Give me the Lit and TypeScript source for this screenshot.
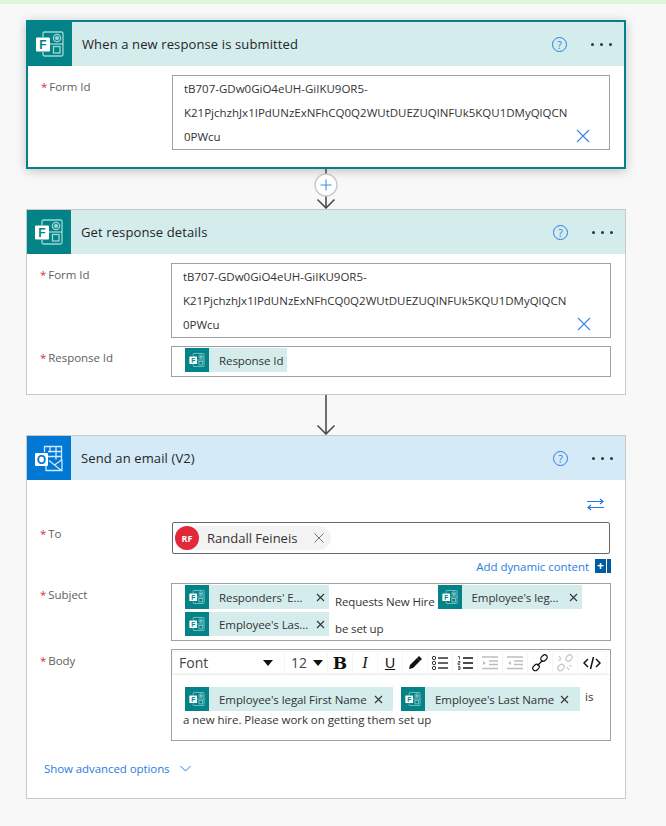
import { LitElement, html, css, svg } from "lit";
import { customElement } from "lit/decorators.js";

const formsIcon = (size: number) => html`<svg class="logo" width=${size} height=${size} viewBox="0 0 44 44" style="background:#038387">
  ${svg`<g fill="none" stroke="#9fd6d6" stroke-width="1.3">
    <path d="M15 15v-3.5a1.5 1.5 0 0 1 1.500-1.500h17a1.500 1.500 0 0 1 1.500 1.500v21a1.500 1.500 0 0 1-1.500 1.500h-17a1.500 1.500 0 0 1-1.500-1.500V30"/>
    <path d="M22 22h13" />
    <circle cx="29" cy="16" r="3.6"/><circle cx="29" cy="16" r="1.4" fill="#9fd6d6"/>
    <rect x="25.5" y="24.5" width="6.5" height="6.5"/>
  </g>
  <rect x="8" y="15.5" width="14" height="14" rx="1" fill="#fff"/>
  <text x="15" y="27" text-anchor="middle" font-family="Liberation Sans, sans-serif" font-weight="700" font-size="12" fill="#038387">F</text>`}
</svg>`;

const outlookIcon = html`<svg class="logo" width="44" height="44" viewBox="0 0 44 44" style="background:#0078d4">
  ${svg`<g fill="none" stroke="#cfe8fa" stroke-width="1.3">
    <path d="M17.500 16V10.500h17V24"/>
    <path d="M23 10.500v6M29 10.500v13M21 15.500h13.500M21 20.500h13.500"/>
    <path d="M19 30v4.500h16V23.500M22 24.500l5.500 4.500 7-5M27.500 29l7 5.500"/>
  </g>
  <rect x="8" y="17" width="13" height="13" rx="1" fill="#fff"/>
  <text x="14.5" y="27.6" text-anchor="middle" font-family="Liberation Sans, sans-serif" font-weight="700" font-size="12" fill="#0078d4">O</text>`}
</svg>`;

const helpIcon = html`<svg width="15" height="15" viewBox="0 0 15 15" class="help">
  ${svg`<circle cx="7.5" cy="7.5" r="7" fill="none" stroke="#2a7ee0" stroke-width="1"/>
  <text x="7.5" y="11.500" text-anchor="middle" font-family="Open Sans, sans-serif" font-size="10.500" fill="#2a7ee0">?</text>`}
</svg>`;

const closeBlue = html`<svg class="clear" width="14" height="14" viewBox="0 0 14 14">
  ${svg`<path d="M1 1l12 12M13 1L1 13" stroke="#3b82e8" stroke-width="1.1" fill="none"/>`}
</svg>`;

const x = (mr: number) => html`<svg class="x" style="margin-right:${mr}px" width="9" height="9" viewBox="0 0 9 9">
  ${svg`<path d="M1 1l7 7M8 1L1 8" stroke="#333" stroke-width="1.1" fill="none"/>`}
</svg>`;

const chip = (label: string, w: number, mr = 4) => html`<span class="chip" style="width:${w}px">
  ${formsIcon(24)}<span class="chip-t">${label}</span>${mr >= 0 ? x(mr) : ""}
</span>`;

const connector = (plus: boolean) => html`<div class="conn">
  <svg width="26" height="40" viewBox="0 0 26 40">
    ${svg`<path d="M13 0V39M4.500 30.500L13 39L21.500 30.500" fill="none" stroke="#4d4d4d" stroke-width="1.6"/>`}
    ${plus
      ? svg`<circle cx="13" cy="16" r="11" fill="#fff" stroke="#c8c8c8" stroke-width="1.4"/>
         <path d="M13 10.500v11M7.500 16h11" stroke="#3f8fe0" stroke-width="1.1"/>`
      : ""}
  </svg>
</div>`;

const formValue = html`<div>tB707-GDw0GiO4eUH-GiIKU9OR5-</div>
  <div>K21PjchzhJx1IPdUNzExNFhCQ0Q2WUtDUEZUQlNFUk5KQU1DMyQlQCN</div>
  <div>0PWcu</div>`;

const header = (icon: unknown, title: string) => html`<div class="head">
  ${icon}
  <div class="title">${title}</div>
  ${helpIcon}
  <div class="dots"><i></i><i></i><i></i></div>
</div>`;

const req = (t: string) => html`<div class="lab"><b>*</b>${t}</div>`;

const tb = (content: unknown, cls = "") => html`<span class="tb ${cls}">${content}</span>`;

const caret = html`<svg width="10" height="6" viewBox="0 0 10 6">${svg`<path d="M0 0h10L5 6z" fill="#111"/>`}</svg>`;

const ico = (inner: unknown) => html`<svg width="18" height="18" viewBox="0 0 18 18">${inner}</svg>`;

const listLines = (color: string) => svg`<path d="M7 4h10M7 9h10M7 14h10" stroke=${color} stroke-width="1.4"/>`;

@customElement("app-root")
export class AppRoot extends LitElement {
  static styles = css`
    :host { display: block; width: 666px; height: 826px; background: #f8f8f8; overflow: hidden;
      font-family: "Open Sans", "Noto Sans", sans-serif; font-size: 11.5px; color: #333; }
    .top { height: 4px; background: #dff6dd; }
    .flow { display: flex; flex-direction: column; padding: 16px 40px 0 26px; }
    .card { background: #fff; border: 1px solid #c8c8c8; box-sizing: border-box; width: 600px; }
    .card.sel { border: 2px solid #038387; box-shadow: 0 2px 10px rgba(0,0,0,.22); }
    .head { height: 44px; display: flex; align-items: center; background: #d4ecec; }
    .blue .head { background: #d5eaf7; }
    .logo { display: block; flex: none; }
    .title { flex: 1; margin-left: 10px; font-size: 13px; color: #252525; letter-spacing: 0.12px; }
    .help { flex: none; margin-right: 24px; }
    .dots { display: flex; gap: 6px; margin-right: 12px; }
    .dots i { width: 3px; height: 3px; border-radius: 50%; background: #333; }
    .body { padding: 9px 14px 17px 0; display: flex; flex-direction: column; gap: 8px; }
    .row { display: grid; grid-template-columns: 144px 1fr; }
    .lab { padding: 4px 0 0 13px; color: #605e5c; font-size: 11.5px; letter-spacing: -0.05px; }
    .lab b { color: #d13438; font-weight: 400; margin-right: 2px; }
    .box { position: relative; border: 1px solid #a0a0a0; box-sizing: border-box; color: #333; }
    .val { height: 75px; padding: 1px 0 0 11px; line-height: 24px; white-space: nowrap; font-size: 11.5px; }
    .clear { position: absolute; right: 19px; bottom: 6px; }
    .single { height: 31px; padding: 1px 13px; }
    .chip { display: inline-flex; align-items: center; flex: none; height: 24px; background: #d4ecec; white-space: nowrap; box-sizing: border-box; }
    .chip-t { flex: 1; padding-left: 10px; letter-spacing: -0.08px; color: #333; font-size: 11.5px; }
    .x { flex: none; }
    .conn { height: 40px; display: flex; justify-content: center; align-items: stretch; }
    .conn svg { display: block; }
    .swap { height: 42px; display: flex; justify-content: flex-end; align-items: flex-end; padding-right: 7px; box-sizing: border-box; padding-bottom: 11px; }
    .b3 { padding: 0 14px 0 0; display: flex; flex-direction: column; }
    .to { height: 32px; margin: 0 1px; border: 1px solid #666; border-radius: 2px; box-sizing: border-box; display: flex; align-items: center; padding-left: 2px; }
    .person { display: flex; align-items: center; height: 24px; width: 156px; border-radius: 12px; background: #f3f3f3; font-size: 13px; color: #333; }
    .av { width: 24px; height: 24px; border-radius: 50%; background: #e1293a; color: #fff; font-size: 9px; font-weight: 700; display: flex; align-items: center; justify-content: center; margin-right: 8px; }
    .person .n { flex: 1; }
    .person svg { margin-right: 7px; }
    .dyn { height: 29px; display: flex; justify-content: flex-end; align-items: center; gap: 6px; color: #2a7ee0; font-size: 11.5px; letter-spacing: -0.06px; padding-bottom: 5px; box-sizing: border-box; }
    .dyn .btn { width: 16px; height: 14px; background: linear-gradient(90deg, #005ba1 0 11px, #fff 11px 12px, #005ba1 12px); color: #fff; font-size: 12px; font-weight: 700; line-height: 13px; padding-right: 5px; box-sizing: border-box; text-align: center; letter-spacing: 0; }
    .subject { height: 58px; padding: 1px 0 0 13px; display: flex; flex-direction: column; gap: 3px; }
    .sr { display: flex; height: 24px; }
    .sr .t { margin: 8px 3px 0 6px; line-height: 18px; letter-spacing: -0.13px; white-space: nowrap; }
    .gap8 { height: 8px; }
    .rte { height: 92px; }
    .toolbar { height: 25px; display: flex; gap: 1px; padding: 2px 0 0 1px; box-sizing: border-box; border-bottom: 1px solid #eee; }
    .tb { width: 24px; height: 21px; display: flex; align-items: center; justify-content: center; box-shadow: 0 0 0 1px #f6f6f6; color: #111; font-family: "Liberation Serif", serif; font-size: 14px; }
    .tb.sel { width: 111px; justify-content: space-between; padding: 0 11px 0 6px; box-sizing: border-box; font-family: "Open Sans", sans-serif; font-size: 14px; color: #444; font-weight: 400; }
    .tb.size { width: 42px; justify-content: space-between; padding: 0 4px 0 6px; box-sizing: border-box; font-family: "Open Sans", sans-serif; font-size: 14px; color: #444; }
    .tb.bold { font-weight: 700; font-size: 17px; font-family: "DejaVu Serif", serif; }
    .tb.it { font-style: italic; font-size: 16px; }
    .tb.un { text-decoration: underline; font-size: 14px; font-family: "Liberation Sans", sans-serif; }
    .tb.code { width: 28px; }
    .rt { padding: 12px 0 0 13px; }
    .rr { display: flex; gap: 8px; }
    .rr .chip-t { padding-top: 1px; }
    .rr .is { margin: 2px 0 0 -3px; }
    .l2 { margin: 0 0 0 -2px; line-height: 18px; letter-spacing: -0.05px; white-space: nowrap; }
    .adv { height: 57px; display: flex; align-items: center; gap: 10px; padding: 0 0 3px 17px; color: #2a7ee0; font-size: 11.5px; letter-spacing: -0.08px; box-sizing: border-box; }
  `;

  render() {
    return html`
      <div class="top"></div>
      <div class="flow">
        <div class="card sel">
          ${header(formsIcon(44), "When a new response is submitted")}
          <div class="body">
            <div class="row">${req("Form Id")}
              <div class="box val">${formValue}${closeBlue}</div></div>
          </div>
        </div>
        ${connector(true)}
        <div class="card">
          ${header(formsIcon(44), "Get response details")}
          <div class="body">
            <div class="row">${req("Form Id")}
              <div class="box val">${formValue}${closeBlue}</div></div>
            <div class="row">${req("Response Id")}
              <div class="box single">${chip("Response Id", 102, -1)}</div></div>
          </div>
        </div>
        ${connector(false)}
        <div class="card blue">
          ${header(outlookIcon, "Send an email (V2)")}
          <div class="b3">
            <div class="swap"><svg width="17" height="14" viewBox="0 0 17 14">
              ${svg`<path d="M0 4.500h16M13 2l3 2.500L13 7M17 10.500H1M4 8l-3 2.500L4 13" fill="none" stroke="#1f78e6" stroke-width="1.2"/>`}
            </svg></div>
            <div class="row">${req("To")}
              <div class="to"><span class="person"><span class="av">RF</span><span class="n">Randall Feineis</span>
                <svg width="10" height="10" viewBox="0 0 10 10">${svg`<path d="M.5.5l9 9M9.500.5l-9 9" stroke="#777" stroke-width="1"/>`}</svg></span></div></div>
            <div class="row"><div></div><div class="dyn">Add dynamic content <span class="btn">+</span></div></div>
            <div class="row">${req("Subject")}
              <div class="box subject">
                <div class="sr">${chip("Responders' E...", 144)}<span class="t">Requests New Hire</span>${chip("Employee's leg...", 144)}</div>
                <div class="sr">${chip("Employee's Las...", 144)}<span class="t">be set up</span></div>
              </div></div>
            <div class="gap8"></div>
            <div class="row">${req("Body")}
              <div class="box rte">
                <div class="toolbar">
                  ${tb(html`Font ${caret}`, "sel")}
                  ${tb(html`12 ${caret}`, "size")}
                  ${tb("B", "bold")}${tb("I", "it")}${tb("U", "un")}
                  ${tb(ico(svg`<path d="M3 15l1-4L11 4l3 3-7 7z" fill="#111"/><path d="M11 4l2-2 3 3-2 2z" fill="#111"/>`))}
                  ${tb(ico(svg`${listLines("#333")}<circle cx="3" cy="4" r="1.7" fill="none" stroke="#333"/><circle cx="3" cy="9" r="1.7" fill="none" stroke="#333"/><circle cx="3" cy="14" r="1.7" fill="none" stroke="#333"/>`))}
                  ${tb(ico(svg`${listLines("#111")}<path d="M2 2.500h1.500v3M2 7.500h2v1.500H2v1.500h2M2 12.500h2v3H2M2 14h2" fill="none" stroke="#333" stroke-width=".8"/>`))}
                  ${tb(ico(svg`<path d="M1 3h16M8 7h9M8 10.500h9M1 14.500h16" stroke="#bdbdbd" stroke-width="1.3"/><path d="M2 7l3 2-3 2z" fill="#bdbdbd"/>`))}
                  ${tb(ico(svg`<path d="M1 3h16M8 7h9M8 10.500h9M1 14.500h16" stroke="#bdbdbd" stroke-width="1.3"/><path d="M5 7L2 9l3 2z" fill="#bdbdbd"/>`))}
                  ${tb(ico(svg`<g fill="none" stroke="#111" stroke-width="1.2"><rect x="9.500" y="1.500" width="7" height="5" rx="2.500" transform="rotate(-45 13 4)"/><rect x="1.500" y="11" width="7" height="5" rx="2.500" transform="rotate(-45 5 13.500)"/><path d="M6.500 11.500l5-5"/></g>`))}
                  ${tb(ico(svg`<g fill="none" stroke="#c4c4c4" stroke-width="1.2"><rect x="9.500" y="1.500" width="7" height="5" rx="2.500" transform="rotate(-45 13 4)"/><rect x="1.500" y="11" width="7" height="5" rx="2.500" transform="rotate(-45 5 13.500)"/><path d="M3 2l2 3M2 6h3M13 16l-2-3M16 12h-3"/></g>`))}
                  ${tb(ico(svg`<path d="M5 5L1 9l4 4M13 5l4 4-4 4M10.500 3l-3 12" fill="none" stroke="#111" stroke-width="1.500"/>`), "code")}
                </div>
                <div class="rt">
                  <div class="rr">${chip("Employee's legal First Name", 208, 10)}${chip("Employee's Last Name", 179, 11)}<span class="is">is</span></div>
                  <div class="l2">a new hire. Please work on getting them set up</div>
                </div>
              </div></div>
            <div class="adv">Show advanced options
              <svg width="11" height="7" viewBox="0 0 11 7">${svg`<path d="M.5 1l5 5 5-5" fill="none" stroke="#2a7ee0" stroke-width="1"/>`}</svg></div>
          </div>
        </div>
      </div>
    `;
  }
}
